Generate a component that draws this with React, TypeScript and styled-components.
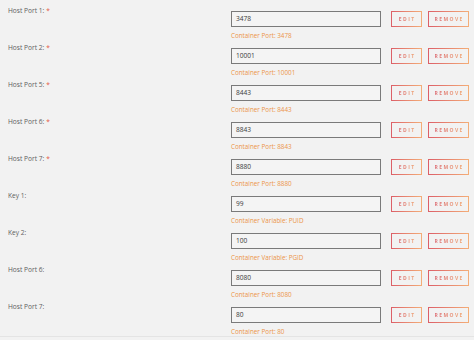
import React from "react";
import styled, { createGlobalStyle } from "styled-components";

const Global = createGlobalStyle`
  html, body { margin: 0; padding: 0; background: #f2f2f2; }
  body { font-family: "Open Sans", "Noto Sans", sans-serif; }
`;

const Panel = styled.div`
  width: 474px;
  height: 337px;
  box-sizing: border-box;
  padding: 5px 0 0 8px;
  background: #f2f2f2;
  border-bottom: 1px solid #e4e4e4;
  overflow: hidden;
`;

const Row = styled.div`
  display: grid;
  grid-template-columns: 223px 1fr;
  height: 37px;
`;

const Label = styled.div`
  font-size: 6.6px;
  line-height: 11px;
  color: #5e5e5e;
`;

const Req = styled.span`
  color: #e4583e;
  margin-left: 2px;
`;

const Field = styled.div`
  display: flex;
  flex-direction: column;
  padding-top: 6px;
`;

const Controls = styled.div`
  display: flex;
  align-items: center;
  height: 16px;
`;

const Input = styled.div`
  width: 150px;
  height: 16px;
  box-sizing: border-box;
  border: 1.5px solid #7a7a7a;
  background: #f4f4f4;
  font-size: 6.6px;
  line-height: 13px;
  padding-left: 4px;
  color: #3a3a3a;
`;

const Button = styled.div<{ $w: number; $ml: number }>`
  width: ${(p) => p.$w}px;
  margin-left: ${(p) => p.$ml}px;
  height: 16px;
  box-sizing: border-box;
  border: 1.5px solid;
  border-image: linear-gradient(90deg, #dc5f68, #f4ae78) 1;
  display: flex;
  align-items: center;
  justify-content: center;
  font-size: 5px;
  font-weight: 700;
  letter-spacing: 1.4px;
  padding-left: 1.4px;
`;

const ButtonText = styled.span`
  background: linear-gradient(90deg, #dc6a70, #f0aa78);
  -webkit-background-clip: text;
  background-clip: text;
  color: transparent;
`;

const Hint = styled.div`
  margin-top: 4px;
  font-size: 6.3px;
  line-height: 10px;
  color: #ec9448;
`;

type Item = { label: string; req: boolean; value: string; hint: string };

const items: Item[] = [
  { label: "Host Port 1:", req: true, value: "3478", hint: "Container Port: 3478" },
  { label: "Host Port 2:", req: true, value: "10001", hint: "Container Port: 10001" },
  { label: "Host Port 5:", req: true, value: "8443", hint: "Container Port: 8443" },
  { label: "Host Port 6:", req: true, value: "8843", hint: "Container Port: 8843" },
  { label: "Host Port 7:", req: true, value: "8880", hint: "Container Port: 8880" },
  { label: "Key 1:", req: false, value: "99", hint: "Container Variable: PUID" },
  { label: "Key 2:", req: false, value: "100", hint: "Container Variable: PGID" },
  { label: "Host Port 6:", req: false, value: "8080", hint: "Container Port: 8080" },
  { label: "Host Port 7:", req: false, value: "80", hint: "Container Port: 80" },
];

export default function App() {
  return (
    <>
      <Global />
      <Panel>
        {items.map((it, i) => (
          <Row key={i}>
            <Label>
              {it.label}
              {it.req && <Req>*</Req>}
            </Label>
            <Field>
              <Controls>
                <Input>{it.value}</Input>
                <Button $w={31} $ml={10}>
                  <ButtonText>EDIT</ButtonText>
                </Button>
                <Button $w={41} $ml={6}>
                  <ButtonText>REMOVE</ButtonText>
                </Button>
              </Controls>
              <Hint>{it.hint}</Hint>
            </Field>
          </Row>
        ))}
      </Panel>
    </>
  );
}
